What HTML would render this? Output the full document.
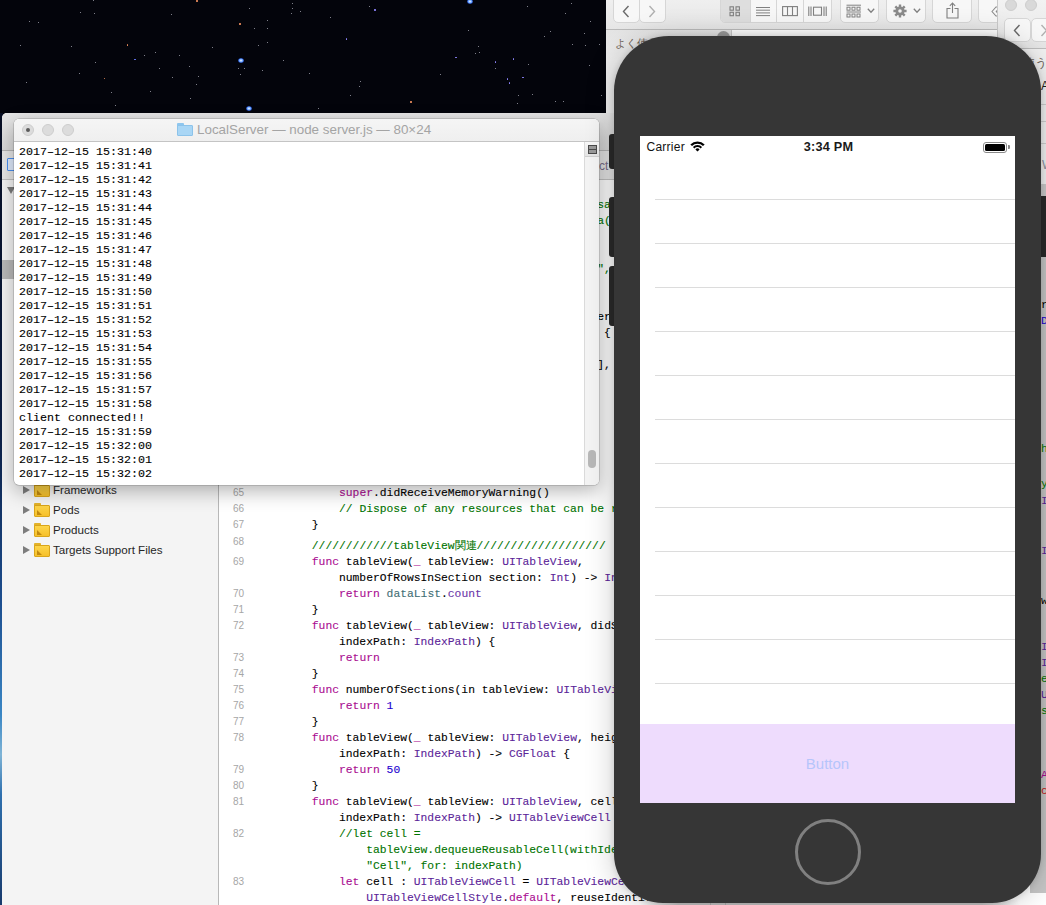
<!DOCTYPE html>
<html><head><meta charset="utf-8">
<style>
*{margin:0;padding:0;box-sizing:border-box}
html,body{width:1046px;height:905px;overflow:hidden;position:relative;background:#04050d;font-family:"Liberation Sans",sans-serif}
.abs{position:absolute}
#sky{left:0;top:0;width:606px;height:113px;background:#03040b;overflow:hidden}
#deskstrip{left:0;top:113px;width:3px;height:792px;background:linear-gradient(#080f24,#0c1e44 40%,#1d4f90 62%,#3a86c4 76%,#7fb4d6 81%,#2f70ae 86%,#183a6c)}
/* finder 1 */
#finder1{left:606px;top:0;width:440px;height:113px;background:#ececec;overflow:hidden}
#finder1 .tb{left:0;top:0;width:440px;height:30px;background:linear-gradient(#efefef,#e6e6e6);border-bottom:1px solid #b9b9b9}
#finder1 .side{left:0;top:30px;width:126px;height:100px;background:linear-gradient(#e4e4e4,#ececec 30%);border-right:1px solid #c8c8c8}
.fbtn{position:absolute;top:-6px;height:29px;border:1px solid #d6d6d6;border-radius:5px;background:#f7f7f7}
#finder2{left:997px;top:0;width:60px;height:200px;background:#f1f1f1;border-left:1px solid #c9c9c9;overflow:hidden}
/* xcode */
#xcode{left:2px;top:113px;width:1044px;height:792px;background:#fff;border-radius:5px 0 0 0;overflow:hidden}
#xtool{left:0;top:0;width:1044px;height:38px;background:linear-gradient(#e6e6e6,#d9d9d9);border-bottom:1px solid #b4b4b4}
#xjump{left:0;top:38px;width:1044px;height:29px;background:#e6e6e6;border-bottom:1px solid #c2c2c2}
#nav{left:0;top:67px;width:217px;height:725px;background:#f4f4f4;border-right:1px solid #b8b8b8}
.tri{width:0;height:0;border-top:4px solid transparent;border-bottom:4px solid transparent;border-left:7px solid #7d7d7d}
.folder{width:16px;height:14px}
.folder .ftab{position:absolute;left:0;top:0;width:7px;height:3px;background:#e3b22a;border-radius:1px 1px 0 0}
.folder .fbody{position:absolute;left:0;top:2px;width:16px;height:12px;background:linear-gradient(#fdd54a,#f6c02a);border:1px solid #d9a51c;border-radius:1px}
.folder .fmark{position:absolute;left:3px;top:7px;width:0;height:0;border-left:5px solid #c28a10;border-top:5px solid transparent}
.navtxt{font-size:11.6px;line-height:16px;color:#262626;white-space:nowrap}
/* terminal */
#term{left:14px;top:119px;width:585px;height:366px;background:#fff;border-radius:5px;overflow:hidden;box-shadow:0 0 0 0.5px rgba(0,0,0,0.25),0 6px 20px rgba(0,0,0,0.3)}
#term .title{left:0;top:0;width:585px;height:23px;background:linear-gradient(#f5f5f5,#efefef);border-bottom:1px solid #c4c4c4}
.tl{position:absolute;top:5px;width:12px;height:12px;border-radius:50%;background:#dcdcdc;border:1px solid #cdcdcd}
#term .ttl{left:183px;top:3px;font-size:13.4px;line-height:16px;color:#a4a4a4;white-space:nowrap}
#term .lines{left:5px;top:26px;-webkit-text-stroke:0.12px #000;font-family:"Liberation Mono",monospace;font-size:11.67px;line-height:14px;white-space:pre;color:#000}
#term .sb{left:570px;top:23px;width:15px;height:343px;background:#f4f4f4;border-left:1px solid #dadada}
/* phone */
#phone{left:614px;top:36px;width:427px;height:867px;background:#363636;border-radius:55px 55px 49px 49px;box-shadow:0 2px 30px rgba(0,0,0,0.2),0 0 6px rgba(0,0,0,0.15)}
.btn{background:#2a2a2a}
.mono1{font-family:"Liberation Mono",monospace;font-size:11.33px;line-height:16px}
#screen{left:640px;top:136px;width:375px;height:667px;background:#fff;overflow:hidden}
.sep{position:absolute;left:15px;width:360px;height:1px;background:#dcdcdc}
#pbtn{left:0;top:588px;width:375px;height:79px;background:#eedcfd}
#home{left:795px;top:819px;width:66px;height:66px;border-radius:50%;border:3px solid #808080}
.cl{position:absolute;left:284.6px;-webkit-text-stroke:0.1px currentColor;font-family:"Liberation Mono",monospace;font-size:11.33px;line-height:16px;white-space:pre;color:#000}
.ln{position:absolute;left:214px;width:30px;text-align:right;font-size:10px;line-height:14px;color:#a6a6a6}
#codewrap{left:219px;top:179px;width:827px;height:726px;overflow:hidden}
#codeinner{left:-219px;top:-179px;width:1046px;height:905px}
</style></head><body>
<div id="sky" class="abs"><div class="abs" style="left:238px;top:57.5px;width:6px;height:5px;border-radius:50%;background:radial-gradient(#f4f8ff 0,#5d9bff 45%,rgba(30,70,220,0.6) 70%,rgba(0,0,0,0) 100%)"></div><div class="abs" style="left:245.5px;top:106.0px;width:6px;height:5px;border-radius:50%;background:radial-gradient(#f4f8ff 0,#5d9bff 45%,rgba(30,70,220,0.6) 70%,rgba(0,0,0,0) 100%)"></div><div class="abs" style="left:466.6px;top:-1.1px;width:6px;height:5px;border-radius:50%;background:radial-gradient(#f4f8ff 0,#5d9bff 45%,rgba(30,70,220,0.6) 70%,rgba(0,0,0,0) 100%)"></div><div class="abs" style="left:92.7px;top:0.3px;width:1.1px;height:1.1px;border-radius:50%;background:#a8a8b4"></div><div class="abs" style="left:80.0px;top:11.9px;width:1.1px;height:1.1px;border-radius:50%;background:#a8a8b4"></div><div class="abs" style="left:93.6px;top:12.5px;width:1.1px;height:1.1px;border-radius:50%;background:#a8a8b4"></div><div class="abs" style="left:29.3px;top:21.2px;width:1.1px;height:1.1px;border-radius:50%;background:#a8a8b4"></div><div class="abs" style="left:38.0px;top:22.0px;width:1.1px;height:1.1px;border-radius:50%;background:#a8a8b4"></div><div class="abs" style="left:126.7px;top:44.2px;width:1.5px;height:1.5px;border-radius:50%;background:#f09060"></div><div class="abs" style="left:134.2px;top:58.6px;width:1.5px;height:1.5px;border-radius:50%;background:#6a7dff"></div><div class="abs" style="left:20.3px;top:44.9px;width:1.1px;height:1.1px;border-radius:50%;background:#a8a8b4"></div><div class="abs" style="left:71.3px;top:46.4px;width:1.1px;height:1.1px;border-radius:50%;background:#a8a8b4"></div><div class="abs" style="left:144.3px;top:54.5px;width:1.1px;height:1.1px;border-radius:50%;background:#a8a8b4"></div><div class="abs" style="left:155.3px;top:51.6px;width:1.1px;height:1.1px;border-radius:50%;background:#a8a8b4"></div><div class="abs" style="left:179.1px;top:54.5px;width:1.1px;height:1.1px;border-radius:50%;background:#a8a8b4"></div><div class="abs" style="left:211.5px;top:47.2px;width:1.1px;height:1.1px;border-radius:50%;background:#a8a8b4"></div><div class="abs" style="left:189.2px;top:65.5px;width:1.1px;height:1.1px;border-radius:50%;background:#a8a8b4"></div><div class="abs" style="left:238.4px;top:67.5px;width:1.1px;height:1.1px;border-radius:50%;background:#a8a8b4"></div><div class="abs" style="left:244.2px;top:68.1px;width:1.1px;height:1.1px;border-radius:50%;background:#a8a8b4"></div><div class="abs" style="left:239.9px;top:74.2px;width:1.1px;height:1.1px;border-radius:50%;background:#a8a8b4"></div><div class="abs" style="left:253.8px;top:27.8px;width:1.1px;height:1.1px;border-radius:50%;background:#a8a8b4"></div><div class="abs" style="left:267.4px;top:20.3px;width:1.1px;height:1.1px;border-radius:50%;background:#a8a8b4"></div><div class="abs" style="left:267.4px;top:27.8px;width:1.1px;height:1.1px;border-radius:50%;background:#a8a8b4"></div><div class="abs" style="left:258.1px;top:45.2px;width:1.1px;height:1.1px;border-radius:50%;background:#a8a8b4"></div><div class="abs" style="left:267.4px;top:42.3px;width:1.1px;height:1.1px;border-radius:50%;background:#a8a8b4"></div><div class="abs" style="left:282.5px;top:60.3px;width:1.1px;height:1.1px;border-radius:50%;background:#a8a8b4"></div><div class="abs" style="left:261.6px;top:69.6px;width:1.1px;height:1.1px;border-radius:50%;background:#a8a8b4"></div><div class="abs" style="left:239.1px;top:23.3px;width:1.5px;height:1.5px;border-radius:50%;background:#f09060"></div><div class="abs" style="left:291.5px;top:8.1px;width:1.1px;height:1.1px;border-radius:50%;background:#a8a8b4"></div><div class="abs" style="left:290.6px;top:12.5px;width:1.1px;height:1.1px;border-radius:50%;background:#a8a8b4"></div><div class="abs" style="left:300.1px;top:11.0px;width:1.1px;height:1.1px;border-radius:50%;background:#a8a8b4"></div><div class="abs" style="left:248.6px;top:7.6px;width:1.1px;height:1.1px;border-radius:50%;background:#a8a8b4"></div><div class="abs" style="left:196.2px;top:0.1px;width:1.5px;height:1.5px;border-radius:50%;background:#f09060"></div><div class="abs" style="left:170.9px;top:13.9px;width:1.1px;height:1.1px;border-radius:50%;background:#a8a8b4"></div><div class="abs" style="left:95.0px;top:61.7px;width:1.1px;height:1.1px;border-radius:50%;background:#a8a8b4"></div><div class="abs" style="left:79.1px;top:73.3px;width:1.1px;height:1.1px;border-radius:50%;background:#a8a8b4"></div><div class="abs" style="left:103.5px;top:77.5px;width:1.5px;height:1.5px;border-radius:50%;background:#f09060"></div><div class="abs" style="left:25.5px;top:82.0px;width:1.1px;height:1.1px;border-radius:50%;background:#a8a8b4"></div><div class="abs" style="left:111.0px;top:92.1px;width:1.1px;height:1.1px;border-radius:50%;background:#a8a8b4"></div><div class="abs" style="left:115.3px;top:105.2px;width:1.1px;height:1.1px;border-radius:50%;background:#a8a8b4"></div><div class="abs" style="left:149.5px;top:91.3px;width:1.1px;height:1.1px;border-radius:50%;background:#a8a8b4"></div><div class="abs" style="left:158.8px;top:68.4px;width:1.1px;height:1.1px;border-radius:50%;background:#a8a8b4"></div><div class="abs" style="left:171.8px;top:77.1px;width:1.1px;height:1.1px;border-radius:50%;background:#a8a8b4"></div><div class="abs" style="left:197.9px;top:76.2px;width:1.1px;height:1.1px;border-radius:50%;background:#a8a8b4"></div><div class="abs" style="left:195.6px;top:83.5px;width:1.1px;height:1.1px;border-radius:50%;background:#a8a8b4"></div><div class="abs" style="left:190.1px;top:97.9px;width:1.1px;height:1.1px;border-radius:50%;background:#a8a8b4"></div><div class="abs" style="left:292.0px;top:2.9px;width:1.1px;height:1.1px;border-radius:50%;background:#a8a8b4"></div><div class="abs" style="left:369.1px;top:5.8px;width:1.1px;height:1.1px;border-radius:50%;background:#a8a8b4"></div><div class="abs" style="left:374.1px;top:9.4px;width:1.5px;height:1.5px;border-radius:50%;background:#8f86ff"></div><div class="abs" style="left:330.0px;top:16.8px;width:1.1px;height:1.1px;border-radius:50%;background:#a8a8b4"></div><div class="abs" style="left:345.7px;top:38.4px;width:1.5px;height:1.5px;border-radius:50%;background:#8f86ff"></div><div class="abs" style="left:467.6px;top:29.9px;width:1.1px;height:1.1px;border-radius:50%;background:#a8a8b4"></div><div class="abs" style="left:477.7px;top:46.4px;width:1.1px;height:1.1px;border-radius:50%;background:#a8a8b4"></div><div class="abs" style="left:479.2px;top:51.6px;width:1.1px;height:1.1px;border-radius:50%;background:#a8a8b4"></div><div class="abs" style="left:474.8px;top:52.5px;width:1.1px;height:1.1px;border-radius:50%;background:#a8a8b4"></div><div class="abs" style="left:455.2px;top:56.6px;width:1.5px;height:1.5px;border-radius:50%;background:#8f86ff"></div><div class="abs" style="left:494.9px;top:61.0px;width:1.5px;height:1.5px;border-radius:50%;background:#8f86ff"></div><div class="abs" style="left:512.9px;top:58.1px;width:1.5px;height:1.5px;border-radius:50%;background:#8f86ff"></div><div class="abs" style="left:527.5px;top:63.8px;width:1.1px;height:1.1px;border-radius:50%;background:#a8a8b4"></div><div class="abs" style="left:495.1px;top:68.1px;width:1.1px;height:1.1px;border-radius:50%;background:#a8a8b4"></div><div class="abs" style="left:506.5px;top:78.0px;width:1.5px;height:1.5px;border-radius:50%;background:#8f86ff"></div><div class="abs" style="left:508.5px;top:82.4px;width:1.5px;height:1.5px;border-radius:50%;background:#8f86ff"></div><div class="abs" style="left:522.4px;top:76.9px;width:1.5px;height:1.5px;border-radius:50%;background:#8f86ff"></div><div class="abs" style="left:517.7px;top:95.0px;width:1.1px;height:1.1px;border-radius:50%;background:#a8a8b4"></div><div class="abs" style="left:532.2px;top:94.2px;width:1.1px;height:1.1px;border-radius:50%;background:#a8a8b4"></div><div class="abs" style="left:516.8px;top:103.2px;width:1.1px;height:1.1px;border-radius:50%;background:#a8a8b4"></div><div class="abs" style="left:555.1px;top:100.8px;width:1.1px;height:1.1px;border-radius:50%;background:#a8a8b4"></div><div class="abs" style="left:562.6px;top:100.8px;width:1.1px;height:1.1px;border-radius:50%;background:#a8a8b4"></div><div class="abs" style="left:410.0px;top:101.2px;width:1.5px;height:1.5px;border-radius:50%;background:#f09060"></div><div class="abs" style="left:308.8px;top:73.3px;width:1.1px;height:1.1px;border-radius:50%;background:#a8a8b4"></div><div class="abs" style="left:360.4px;top:81.4px;width:1.1px;height:1.1px;border-radius:50%;background:#a8a8b4"></div><div class="abs" style="left:358.9px;top:86.4px;width:1.1px;height:1.1px;border-radius:50%;background:#a8a8b4"></div><div class="abs" style="left:350.2px;top:95.0px;width:1.1px;height:1.1px;border-radius:50%;background:#a8a8b4"></div><div class="abs" style="left:440.1px;top:73.9px;width:1.1px;height:1.1px;border-radius:50%;background:#a8a8b4"></div><div class="abs" style="left:550.1px;top:31.3px;width:1.1px;height:1.1px;border-radius:50%;background:#a8a8b4"></div><div class="abs" style="left:543.5px;top:35.7px;width:1.1px;height:1.1px;border-radius:50%;background:#a8a8b4"></div><div class="abs" style="left:584.3px;top:32.8px;width:1.1px;height:1.1px;border-radius:50%;background:#a8a8b4"></div><div class="abs" style="left:584.9px;top:44.9px;width:1.1px;height:1.1px;border-radius:50%;background:#a8a8b4"></div><div class="abs" style="left:599.4px;top:43.8px;width:1.1px;height:1.1px;border-radius:50%;background:#a8a8b4"></div><div class="abs" style="left:589.2px;top:65.2px;width:1.1px;height:1.1px;border-radius:50%;background:#a8a8b4"></div><div class="abs" style="left:571.9px;top:43.5px;width:1.1px;height:1.1px;border-radius:50%;background:#a8a8b4"></div><div class="abs" style="left:565.2px;top:13.1px;width:1.1px;height:1.1px;border-radius:50%;background:#a8a8b4"></div><div class="abs" style="left:590.1px;top:21.2px;width:1.1px;height:1.1px;border-radius:50%;background:#a8a8b4"></div><div class="abs" style="left:527.0px;top:5.8px;width:1.1px;height:1.1px;border-radius:50%;background:#a8a8b4"></div><div class="abs" style="left:571.3px;top:3.2px;width:1.1px;height:1.1px;border-radius:50%;background:#a8a8b4"></div><div class="abs" style="left:600.8px;top:95.0px;width:1.1px;height:1.1px;border-radius:50%;background:#a8a8b4"></div><div class="abs" style="left:318.4px;top:108.1px;width:1.1px;height:1.1px;border-radius:50%;background:#a8a8b4"></div></div>
<div id="finder1" class="abs">
  <div class="tb abs">
    <div class="fbtn" style="left:7px;width:27px"></div>
    <div class="fbtn" style="left:33px;width:27px"></div>
    <svg class="abs" style="left:16px;top:5px" width="8" height="13"><path d="M6.5 1 L1.5 6.5 L6.5 12" stroke="#6a6a6a" stroke-width="1.4" fill="none"/></svg>
    <svg class="abs" style="left:42px;top:5px" width="8" height="13"><path d="M1.5 1 L6.5 6.5 L1.5 12" stroke="#b0b0b0" stroke-width="1.4" fill="none"/></svg>
    <div class="fbtn" style="left:114px;width:112px;background:#f7f7f7"></div>
    <div class="abs" style="left:115px;top:-5px;width:29px;height:27px;background:#dedede;border-radius:4px 0 0 4px"></div>
    <div class="abs" style="left:144px;top:-5px;width:1px;height:27px;background:#d6d6d6"></div>
    <div class="abs" style="left:170px;top:-5px;width:1px;height:27px;background:#d6d6d6"></div>
    <div class="abs" style="left:197px;top:-5px;width:1px;height:27px;background:#d6d6d6"></div>
    <svg class="abs" style="left:123px;top:6px" width="12" height="11"><g fill="none" stroke="#808080" stroke-width="1.1"><rect x="1" y="0.8" width="3.4" height="3.4"/><rect x="7" y="0.8" width="3.4" height="3.4"/><rect x="1" y="6.3" width="3.4" height="3.4"/><rect x="7" y="6.3" width="3.4" height="3.4"/></g></svg>
    <svg class="abs" style="left:150px;top:6px" width="15" height="11"><g stroke="#808080" stroke-width="1"><path d="M0 1.5H14M0 4.2H14M0 6.9H14M0 9.6H14"/></g></svg>
    <svg class="abs" style="left:176px;top:6px" width="16" height="11"><g fill="none" stroke="#808080" stroke-width="1.1"><rect x="0.6" y="0.6" width="14.8" height="9"/><path d="M5.5 0.6V9.6M10.5 0.6V9.6"/></g></svg>
    <svg class="abs" style="left:202px;top:6px" width="19" height="11"><g fill="none" stroke="#808080" stroke-width="1.1"><rect x="5.5" y="1.2" width="8" height="8"/><path d="M0.8 0.5V10M3 0.5V10M16 0.5V10M18.2 0.5V10"/></g></svg>
    <div class="fbtn" style="left:234px;width:39px"></div>
    <svg class="abs" style="left:240px;top:4px" width="16" height="14"><g fill="none" stroke="#808080" stroke-width="1"><path d="M0.5 1.2H15M0.5 8H15"/><rect x="1" y="3.2" width="3" height="3"/><rect x="6" y="3.2" width="3" height="3"/><rect x="11" y="3.2" width="3" height="3"/><rect x="1" y="10" width="3" height="3"/><rect x="6" y="10" width="3" height="3"/><rect x="11" y="10" width="3" height="3"/></g></svg>
    <svg class="abs" style="left:261px;top:8px" width="8" height="6"><path d="M0.8 0.8L4 4.2L7.2 0.8" stroke="#808080" stroke-width="1.3" fill="none"/></svg>
    <div class="fbtn" style="left:280px;width:40px"></div>
    <svg class="abs" style="left:287px;top:4px" width="14" height="14" viewBox="0 0 14 14"><g fill="#8a8a8a"><circle cx="7" cy="7" r="4.6"/><g stroke="#8a8a8a" stroke-width="2.4"><path d="M7 0.4V13.6M0.4 7H13.6M2.3 2.3L11.7 11.7M11.7 2.3L2.3 11.7"/></g></g><circle cx="7" cy="7" r="1.8" fill="#f3f3f3"/></svg>
    <svg class="abs" style="left:307px;top:8px" width="8" height="6"><path d="M0.8 0.8L4 4.2L7.2 0.8" stroke="#808080" stroke-width="1.3" fill="none"/></svg>
    <div class="fbtn" style="left:326px;width:40px"></div>
    <svg class="abs" style="left:340px;top:2px" width="13" height="17"><g fill="none" stroke="#808080" stroke-width="1.1"><path d="M4.5 6.5H1V16H12V6.5H8.5"/><path d="M6.5 11V1.2M3.8 3.8L6.5 1.1L9.2 3.8"/></g></svg>
    <div class="fbtn" style="left:372px;width:40px"></div>
    <svg class="abs" style="left:385px;top:6px" width="16" height="11"><path d="M1 5.5L5 1H15V10H5Z" fill="none" stroke="#8a8a8a" stroke-width="1.1"/><circle cx="6" cy="5.5" r="1.2" fill="#8a8a8a"/></svg>
  </div>
  <div class="side abs"><div class="abs" style="left:9px;top:6px;font-size:11px;line-height:14px;color:#6f6257">よく使う項目</div></div>
  <div class="abs" style="left:126px;top:30px;width:314px;height:90px;background:#fdfdfd"></div><div class="abs" style="left:111px;top:31px;width:13px;height:13px;border-radius:50%;background:#9a9a9a"></div>
</div>
<div id="deskstrip" class="abs"></div>
<div id="xcode" class="abs">
  <div id="xtool" class="abs"></div>
  <div id="xjump" class="abs"><div class="abs" style="left:581px;top:7px;font-size:12px;line-height:16px;color:#7a6f8a;white-space:nowrap">oject</div></div>
  <div id="nav" class="abs">
    <div class="abs" style="left:5px;top:-22px;width:9px;height:13px;border:1.5px solid #4a8ff0;border-radius:1px;background:#dfeafc"></div>
    <div class="abs" style="left:0;top:80px;width:217px;height:19px;background:#b9b9b9"></div>
  </div>
</div>
<div class="abs" style="left:7px;top:187px;width:0;height:0;border-left:4px solid transparent;border-right:4px solid transparent;border-top:7px solid #7a7a7a"></div>
<div class="abs tri" style="left:23px;top:486px"></div>
<div class="abs folder" style="left:34px;top:483px"><div class="ftab"></div><div class="fbody"></div><div class="fmark"></div></div>
<div class="abs navtxt" style="left:53px;top:482px">Frameworks</div><div class="abs tri" style="left:23px;top:506px"></div>
<div class="abs folder" style="left:34px;top:503px"><div class="ftab"></div><div class="fbody"></div><div class="fmark"></div></div>
<div class="abs navtxt" style="left:53px;top:502px">Pods</div><div class="abs tri" style="left:23px;top:526px"></div>
<div class="abs folder" style="left:34px;top:523px"><div class="ftab"></div><div class="fbody"></div><div class="fmark"></div></div>
<div class="abs navtxt" style="left:53px;top:522px">Products</div><div class="abs tri" style="left:23px;top:546px"></div>
<div class="abs folder" style="left:34px;top:543px"><div class="ftab"></div><div class="fbody"></div><div class="fmark"></div></div>
<div class="abs navtxt" style="left:53px;top:542px">Targets Support Files</div>
<div id="finder2" class="abs">
  <div class="abs" style="left:0;top:0;width:60px;height:49px;background:linear-gradient(#f2f2f2,#e6e6e6);border-bottom:1px solid #bdbdbd"></div>
  <div class="tl" style="left:7px;top:-1px;background:#d9d9d9"></div>
  <div class="tl" style="left:27px;top:-1px;background:#d9d9d9"></div>
  <div class="fbtn" style="left:6px;top:18px;width:27px;height:24px"></div>
  <div class="fbtn" style="left:33px;top:18px;width:26px;height:24px"></div>
  <svg class="abs" style="left:15px;top:24px" width="8" height="13"><path d="M6.5 1 L1.5 6.5 L6.5 12" stroke="#6a6a6a" stroke-width="1.4" fill="none"/></svg><svg class="abs" style="left:42px;top:24px" width="8" height="13"><path d="M1.5 1 L6.5 6.5 L1.5 12" stroke="#b0b0b0" stroke-width="1.4" fill="none"/></svg>
  <div class="abs" style="left:25px;top:55px;font-size:12px;color:#6f6257">使う</div>
  <div class="abs" style="left:43px;top:79px;font-size:12px;color:#222">A</div>
  <div class="abs" style="left:0;top:104px;width:60px;height:1px;background:#cfcfcf"></div>
  <div class="abs" style="left:0;top:121px;width:60px;height:1px;background:#cfcfcf"></div>
  <div class="abs" style="left:0;top:143px;width:60px;height:1px;background:#cfcfcf"></div>
  <div class="abs" style="left:44px;top:158px;font-size:12px;color:#8a8fa0">W</div>
  <div class="abs" style="left:0;top:184px;width:60px;height:16px;background:#c9c9c9"></div>
</div>
<div id="codewrap" class="abs"><div id="codeinner" class="abs">
<div class="cl" style="top:197px">                                              <span style="color:#007400">sa</span></div>
<div class="cl" style="top:213px">                                              <span style="color:#007400">a(</span></div>
<div class="cl" style="top:261px">                                              <span style="color:#007400">",</span></div>
<div class="cl" style="top:309px">                                              er</div>
<div class="cl" style="top:325px">                                               {</div>
<div class="cl" style="top:357px">                                              ],</div>
<div class="cl" style="top:485px">        <span style="color:#aa0d91">super</span>.didReceiveMemoryWarning()</div>
<div class="cl" style="top:501px">        <span style="color:#007400">// Dispose of any resources that can be recreated.</span></div>
<div class="cl" style="top:517px">    }</div>
<div class="cl" style="top:538px">    <span style="color:#007400">////////////tableView関連///////////////////</span></div>
<div class="cl" style="top:554px">    <span style="color:#aa0d91">func</span> tableView(<span style="color:#aa0d91">_</span> tableView: <span style="color:#5c2699">UITableView</span>,</div>
<div class="cl" style="top:570px">        numberOfRowsInSection section: <span style="color:#5c2699">Int</span>) -&gt; <span style="color:#5c2699">Int</span> {</div>
<div class="cl" style="top:586px">        <span style="color:#aa0d91">return</span> <span style="color:#3f6e74">dataList</span>.<span style="color:#6c36a9">count</span></div>
<div class="cl" style="top:602px">    }</div>
<div class="cl" style="top:618px">    <span style="color:#aa0d91">func</span> tableView(<span style="color:#aa0d91">_</span> tableView: <span style="color:#5c2699">UITableView</span>, didSelectRowAt</div>
<div class="cl" style="top:634px">        indexPath: <span style="color:#5c2699">IndexPath</span>) {</div>
<div class="cl" style="top:650px">        <span style="color:#aa0d91">return</span></div>
<div class="cl" style="top:666px">    }</div>
<div class="cl" style="top:682px">    <span style="color:#aa0d91">func</span> numberOfSections(in tableView: <span style="color:#5c2699">UITableView</span>) -&gt; <span style="color:#5c2699">Int</span> {</div>
<div class="cl" style="top:698px">        <span style="color:#aa0d91">return</span> <span style="color:#1c00cf">1</span></div>
<div class="cl" style="top:714px">    }</div>
<div class="cl" style="top:730px">    <span style="color:#aa0d91">func</span> tableView(<span style="color:#aa0d91">_</span> tableView: <span style="color:#5c2699">UITableView</span>, heightForRowAt</div>
<div class="cl" style="top:746px">        indexPath: <span style="color:#5c2699">IndexPath</span>) -&gt; <span style="color:#5c2699">CGFloat</span> {</div>
<div class="cl" style="top:762px">        <span style="color:#aa0d91">return</span> <span style="color:#1c00cf">50</span></div>
<div class="cl" style="top:778px">    }</div>
<div class="cl" style="top:794px">    <span style="color:#aa0d91">func</span> tableView(<span style="color:#aa0d91">_</span> tableView: <span style="color:#5c2699">UITableView</span>, cellForRowAt</div>
<div class="cl" style="top:810px">        indexPath: <span style="color:#5c2699">IndexPath</span>) -&gt; <span style="color:#5c2699">UITableViewCell</span> {</div>
<div class="cl" style="top:826px">        <span style="color:#007400">//let cell =</span></div>
<div class="cl" style="top:842px">            <span style="color:#007400">tableView.dequeueReusableCell(withIdentifier:</span></div>
<div class="cl" style="top:858px">            <span style="color:#007400">"Cell", for: indexPath)</span></div>
<div class="cl" style="top:874px">        <span style="color:#aa0d91">let</span> cell : <span style="color:#5c2699">UITableViewCell</span> = <span style="color:#5c2699">UITableViewCell</span>(style:</div>
<div class="cl" style="top:890px">            <span style="color:#5c2699">UITableViewCellStyle</span>.<span style="color:#aa0d91">default</span>, reuseIdentifier: <span style="color:#c41a16">"Cell"</span>)</div>
<div class="ln" style="top:486px">65</div>
<div class="ln" style="top:502px">66</div>
<div class="ln" style="top:518px">67</div>
<div class="ln" style="top:535px">68</div>
<div class="ln" style="top:555px">69</div>
<div class="ln" style="top:587px">70</div>
<div class="ln" style="top:603px">71</div>
<div class="ln" style="top:619px">72</div>
<div class="ln" style="top:651px">73</div>
<div class="ln" style="top:667px">74</div>
<div class="ln" style="top:683px">75</div>
<div class="ln" style="top:699px">76</div>
<div class="ln" style="top:715px">77</div>
<div class="ln" style="top:731px">78</div>
<div class="ln" style="top:763px">79</div>
<div class="ln" style="top:779px">80</div>
<div class="ln" style="top:795px">81</div>
<div class="ln" style="top:827px">82</div>
<div class="ln" style="top:875px">83</div>
</div></div>
<div id="term" class="abs">
  <div class="title abs">
    <div class="tl" style="left:8px"><div class="abs" style="left:3px;top:3px;width:4px;height:4px;border-radius:50%;background:#5a5a5a"></div></div>
    <div class="tl" style="left:28px"></div>
    <div class="tl" style="left:48px"></div>
    <div class="abs" style="left:163px;top:4px;width:16px;height:14px">
      <div class="abs" style="left:0;top:0;width:7px;height:3px;background:#8ec6ee;border-radius:1px 1px 0 0"></div>
      <div class="abs" style="left:0;top:2px;width:16px;height:11px;background:#a9d6f5;border:1px solid #8cc3ea;border-radius:1px"></div>
    </div>
    <div class="abs ttl">LocalServer — node server.js — 80×24</div>
  </div>
  <div class="sb abs">
    <div class="abs" style="left:0;top:0;width:14px;height:15px;background:linear-gradient(#f8f8f8,#e4e4e4);border-bottom:1px solid #d0d0d0"></div>
    <div class="abs" style="left:3px;top:3px;width:9px;height:9px;background:#4a4a4a;padding:1px"><div class="abs" style="left:1px;top:1px;width:7px;height:3px;background:#9a9a9a"></div><div class="abs" style="left:1px;top:5px;width:7px;height:3px;background:#9a9a9a"></div></div>
    <div class="abs" style="left:3px;top:308px;width:8px;height:18px;border-radius:4px;background:#b8b8b8"></div>
  </div>
  <div class="lines abs">2017–12–15 15:31:40
2017–12–15 15:31:41
2017–12–15 15:31:42
2017–12–15 15:31:43
2017–12–15 15:31:44
2017–12–15 15:31:45
2017–12–15 15:31:46
2017–12–15 15:31:47
2017–12–15 15:31:48
2017–12–15 15:31:49
2017–12–15 15:31:50
2017–12–15 15:31:51
2017–12–15 15:31:52
2017–12–15 15:31:53
2017–12–15 15:31:54
2017–12–15 15:31:55
2017–12–15 15:31:56
2017–12–15 15:31:57
2017–12–15 15:31:58
client connected!!
2017–12–15 15:31:59
2017–12–15 15:32:00
2017–12–15 15:32:01
2017–12–15 15:32:02</div>
</div>
<div class="abs" style="left:1030px;top:200px;width:16px;height:693px;background:#c6c6c6"></div>
<div class="abs" style="left:640px;top:900px;width:380px;height:5px;background:linear-gradient(90deg,rgba(200,200,200,0),#c8c8c8 10%,#c8c8c8 90%,rgba(200,200,200,0))"></div>
<div class="abs" style="left:710px;top:896px;width:1px;height:9px;background:#b0b0b0"></div>
<div class="abs" style="left:725px;top:896px;width:1px;height:9px;background:#b0b0b0"></div>
<div class="abs mono1" style="left:1041px;top:297px;color:#000">r</div>
<div class="abs mono1" style="left:1041px;top:313px;color:#1c00cf">D</div>
<div class="abs mono1" style="left:1041px;top:441px;color:#007400">h</div>
<div class="abs mono1" style="left:1041px;top:476px;color:#007400">y</div>
<div class="abs mono1" style="left:1041px;top:493px;color:#5c2699">I</div>
<div class="abs mono1" style="left:1041px;top:543px;color:#5c2699">I</div>
<div class="abs mono1" style="left:1041px;top:593px;color:#000">w</div>
<div class="abs mono1" style="left:1041px;top:639px;color:#5c2699">I</div>
<div class="abs mono1" style="left:1041px;top:655px;color:#5c2699">I</div>
<div class="abs mono1" style="left:1041px;top:671px;color:#007400">e</div>
<div class="abs mono1" style="left:1041px;top:687px;color:#5c2699">U</div>
<div class="abs mono1" style="left:1041px;top:703px;color:#007400">s</div>
<div class="abs mono1" style="left:1041px;top:767px;color:#aa0d91">A</div>
<div class="abs mono1" style="left:1041px;top:783px;color:#c41a16">c</div>
<div class="abs btn" style="left:609px;top:134px;width:6px;height:35px;border-radius:3px 0 0 3px"></div>
<div class="abs btn" style="left:609px;top:197px;width:6px;height:60px;border-radius:3px 0 0 3px"></div>
<div class="abs btn" style="left:609px;top:266px;width:6px;height:60px;border-radius:3px 0 0 3px"></div>
<div class="abs btn" style="left:1040px;top:196px;width:8px;height:61px;border-radius:0 3px 3px 0"></div>
<div id="phone" class="abs"></div>
<div id="screen" class="abs">
  <div class="abs" style="left:6.5px;top:3px;font-size:12px;letter-spacing:0.25px;line-height:16px;color:#111">Carrier</div>
  <svg class="abs" style="left:49.5px;top:5px" width="15" height="11" viewBox="0 0 15 11"><path fill="#000" d="M0.31 3.45A10.0 10.0 0 0 1 14.69 3.45L12.97 5.12A7.6 7.6 0 0 0 2.03 5.12ZM7.5 10.4L5.41 8.39A2.9 2.9 0 0 1 9.59 8.39ZM2.90 5.95A6.4 6.4 0 0 1 12.10 5.95L10.59 7.41A4.3 4.3 0 0 0 4.41 7.41Z"/></svg>
  <div class="abs" style="left:1px;top:2.5px;width:375px;text-align:center;font-size:12.7px;font-weight:bold;letter-spacing:0.2px;line-height:16px;color:#1a1a1a">3:34 PM</div>
  <div class="abs" style="left:343px;top:5.5px;width:24px;height:11px;border:1px solid #8a8a8a;border-radius:3px;padding:1px"><div style="width:100%;height:100%;background:#000;border-radius:1.5px"></div></div>
  <div class="abs" style="left:368px;top:9px;width:2px;height:4px;background:#888;border-radius:0 1px 1px 0"></div>
  <div class="sep" style="top:63px"></div><div class="sep" style="top:107px"></div><div class="sep" style="top:151px"></div><div class="sep" style="top:195px"></div><div class="sep" style="top:239px"></div><div class="sep" style="top:283px"></div><div class="sep" style="top:327px"></div><div class="sep" style="top:371px"></div><div class="sep" style="top:415px"></div><div class="sep" style="top:459px"></div><div class="sep" style="top:503px"></div><div class="sep" style="top:547px"></div>
  <div id="pbtn" class="abs"><div class="abs" style="left:0;top:30px;width:375px;text-align:center;font-size:15px;line-height:20px;color:#b6c5fb">Button</div></div>
</div>
<div id="home" class="abs"></div>
</body></html>
